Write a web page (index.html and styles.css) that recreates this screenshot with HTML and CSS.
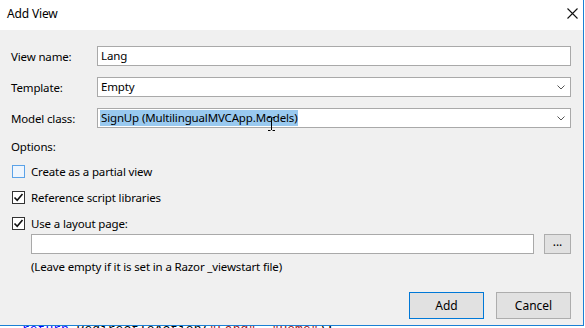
FILE: index.html
```html
<!DOCTYPE html>
<html lang="en">

<head>
    <meta charset="UTF-8">
    <title>Add View</title>
    <link rel="stylesheet" href="styles.css">
</head>

<body>
    <div class="dialog">
        <div class="titlebar">
            <span class="title">Add View</span>
            <svg class="close" width="11" height="11" viewBox="0 0 11 11">
                <path d="M0.5 0.5 L10.5 10.5 M10.5 0.5 L0.5 10.5" stroke="#111" stroke-width="1.1" fill="none" />
            </svg>
        </div>

        <div class="content">
            <div class="fields">
                <label class="label">View name:</label>
                <div class="input">Lang</div>

                <label class="label">Template:</label>
                <div class="input select">
                    <span>Empty</span>
                    <svg class="chevron" width="8" height="5" viewBox="0 0 8 5">
                        <path d="M0.5 0.5 L4 4 L7.5 0.5" stroke="#555" stroke-width="1" fill="none" />
                    </svg>
                </div>

                <label class="label">Model class:</label>
                <div class="input select">
                    <span class="selected">SignUp (MultilingualMVCApp.Models)</span>
                    <svg class="chevron" width="8" height="5" viewBox="0 0 8 5">
                        <path d="M0.5 0.5 L4 4 L7.5 0.5" stroke="#555" stroke-width="1" fill="none" />
                    </svg>
                    <svg class="ibeam" width="7" height="14" viewBox="0 0 7 14">
                        <path d="M0 0.5 H2.5 M4.5 0.5 H7 M3.5 1 V13 M0 13.5 H2.5 M4.5 13.5 H7" stroke="#000" stroke-width="1" fill="none" />
                    </svg>
                </div>
            </div>

            <div class="options-label">Options:</div>

            <div class="check-row">
                <span class="checkbox hover"></span>
                <span>Create as a partial view</span>
            </div>
            <div class="check-row">
                <span class="checkbox">
                    <svg width="11" height="11" viewBox="0 0 11 11">
                        <path d="M1.5 5.5 L4.2 8.3 L9.5 2" stroke="#111" stroke-width="1.6" fill="none" />
                    </svg>
                </span>
                <span>Reference script libraries</span>
            </div>
            <div class="check-row">
                <span class="checkbox">
                    <svg width="11" height="11" viewBox="0 0 11 11">
                        <path d="M1.5 5.5 L4.2 8.3 L9.5 2" stroke="#111" stroke-width="1.6" fill="none" />
                    </svg>
                </span>
                <span>Use a layout page:</span>
            </div>

            <div class="layout-row">
                <div class="input layout-input"></div>
                <button class="btn browse">...</button>
            </div>
            <div class="hint">(Leave empty if it is set in a Razor _viewstart file)</div>

            <div class="actions">
                <button class="btn primary">Add</button>
                <button class="btn">Cancel</button>
            </div>
        </div>
    </div>

    <div class="code">
        <div class="code-line"><span class="kw">return</span> RedirectToAction(<span class="str">"Lang"</span>, <span class="str">"Home"</span>);</div>
    </div>
</body>

</html>
```

FILE: styles.css
```css
* {
    margin: 0;
    padding: 0;
    box-sizing: border-box;
}

body {
    width: 585px;
    height: 328px;
    overflow: hidden;
    background: #ffffff;
    font-family: 'Noto Sans', 'Open Sans', sans-serif;
    font-size: 11.5px;
    letter-spacing: -0.15px;
    color: #000000;
}

.dialog {
    width: 584px;
    height: 326px;
    background: #f0f0f0;
    border-right: 1px solid #1b80d4;
    border-bottom: 1px solid #1b80d4;
    display: flex;
    flex-direction: column;
}

.titlebar {
    height: 30px;
    background: #ffffff;
    display: flex;
    align-items: center;
    justify-content: space-between;
    padding: 0 5px 4px 7px;
}

.title {
    font-size: 12px;
    color: #000;
}

.close {
    display: block;
}

.content {
    padding: 16px 12px 0 11px;
    display: flex;
    flex-direction: column;
}

.fields {
    display: grid;
    grid-template-columns: 86px 1fr;
    row-gap: 11px;
    align-items: center;
}

.input {
    height: 20px;
    background: #ffffff;
    border: 1px solid #a9a9a9;
    padding: 0 3px;
    display: flex;
    align-items: center;
    line-height: 16px;
}

.select {
    position: relative;
    justify-content: space-between;
    padding-right: 5px;
}

.chevron {
    display: block;
}

.selected {
    background: #99c9ef;
    padding: 0 1px;
    margin-left: -1px;
}

.ibeam {
    position: absolute;
    left: 170px;
    top: 8px;
}

.options-label {
    margin-top: 11px;
    height: 16px;
    line-height: 16px;
}

.check-row {
    margin-top: 8px;
    height: 16px;
    display: flex;
    align-items: center;
    gap: 6px;
    padding-left: 1px;
}

.check-row+.check-row {
    margin-top: 10px;
}

.checkbox {
    width: 13px;
    height: 13px;
    border: 1px solid #333333;
    background: #ffffff;
    display: flex;
    align-items: center;
    justify-content: center;
}

.checkbox.hover {
    border-color: #5aa2e8;
    background: #eef5fd;
}

.checkbox svg {
    display: block;
}

.layout-row {
    margin-top: 3px;
    padding-left: 20px;
    display: flex;
    gap: 10px;
}

.layout-input {
    flex: 1;
}

.hint {
    margin-top: 5px;
    padding-left: 20px;
    height: 16px;
    line-height: 16px;
}

.btn {
    font-family: inherit;
    font-size: 12px;
    letter-spacing: 0;
    color: #000;
    background: #e1e1e1;
    border: 1px solid #adadad;
    height: 27px;
    width: 75px;
}

.browse {
    width: 27px;
    height: 20px;
    line-height: 10px;
    padding-bottom: 4px;
}

.primary {
    border-color: #0078d7;
}

.actions {
    margin-top: 17px;
    display: flex;
    justify-content: flex-end;
    gap: 12px;
}

.code {
    height: 2px;
    overflow: hidden;
    padding-left: 22px;
    font-family: 'Liberation Mono', monospace;
    font-size: 13px;
    letter-spacing: 0;
}

.code-line {
    line-height: 16px;
    margin-top: -4px;
    color: #000;
}

.kw {
    color: #0000ff;
}

.str {
    color: #a31515;
}
```
